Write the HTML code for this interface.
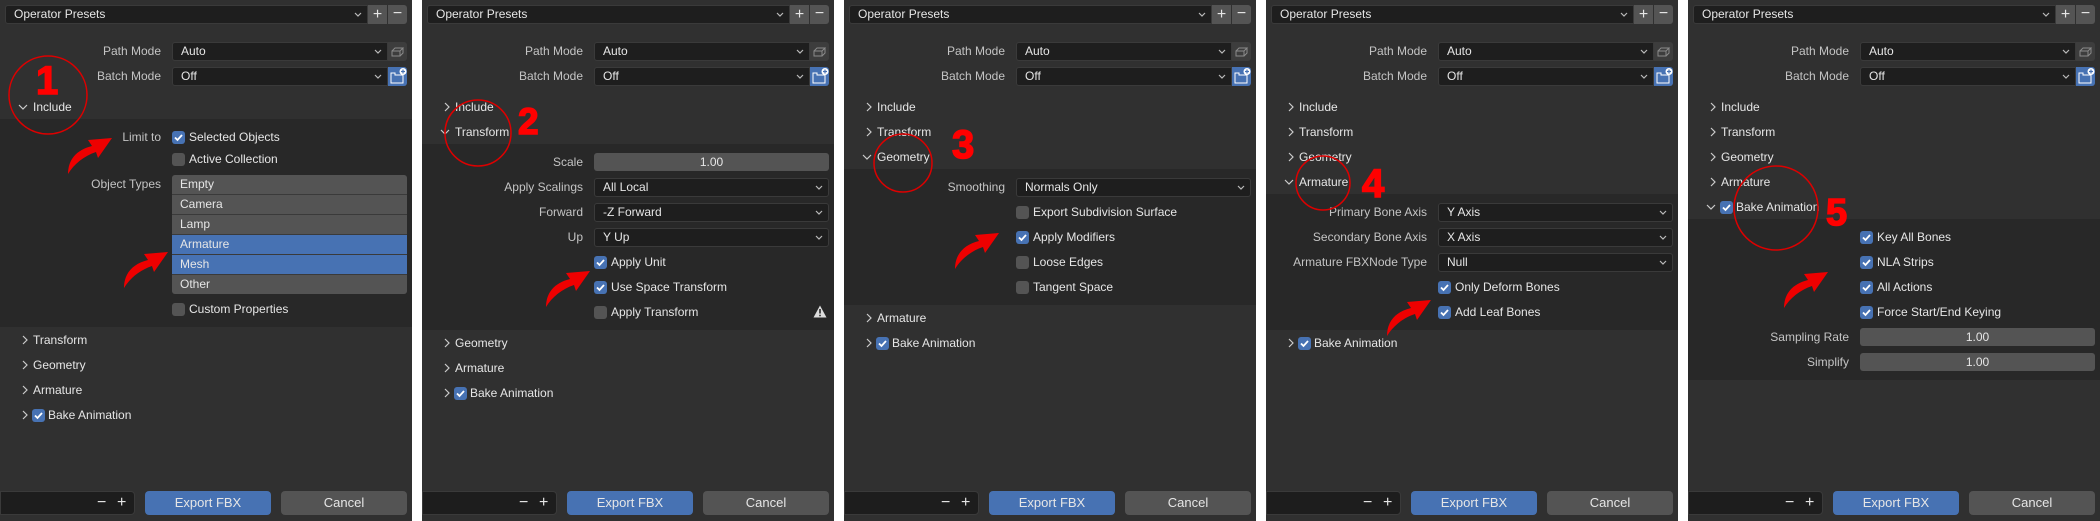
<!DOCTYPE html>
<html><head><meta charset="utf-8"><style>
body{margin:0;width:2100px;height:521px;background:#fff;position:relative;overflow:hidden}
.p{position:absolute;top:0;width:412px;height:521px;background:#303030;overflow:hidden}
.p *{position:absolute;box-sizing:border-box}
.t{font:12px "Liberation Sans",sans-serif;color:#e6e6e6;white-space:nowrap;line-height:14px}
.l{left:0;width:161px;text-align:right;color:#c4c4c4}
.f{left:172px;width:235px;height:19px;background:#1e1e1e;border:1px solid #3a3a3a;border-radius:3px;padding-left:8px;line-height:17px}
.f svg{right:5px;top:6px}
.s{left:172px;width:235px;height:18px;background:#545454;border-radius:3px;text-align:center;line-height:18px}
.cb{left:172px;width:13px;height:13px;border-radius:3px;background:#545454}
.cb.on{background:#4772b3}
.ct{left:189px}
.sec{left:0;width:412px;background:#282828}
.hd{left:33px}
.ot{left:172px;width:235px;height:19px;background:#545454;padding-left:8px;line-height:19px}
.ot.b{background:#4772b3}
.btn{height:24px;top:491px;border-radius:4px;text-align:center;line-height:24px;font-size:13px}
.num{font:900 40px "Liberation Sans",sans-serif;color:#f00;line-height:40px;-webkit-text-stroke:1.5px #f00}
</style></head><body>

<!-- PANEL 1 -->
<div class="p" style="left:0">
<div class="f t" style="left:5px;top:5px;width:363px;height:19px;border-radius:3px 0 0 3px">Operator Presets<svg width="8" height="6"><path d="M1 1l3 3 3-3" stroke="#bbb" fill="none" stroke-width="1.2"/></svg></div>
<div class="t" style="left:368px;top:5px;width:19px;height:19px;background:#545454;text-align:center;line-height:19px;font-size:16px">+</div>
<div class="t" style="left:388px;top:5px;width:19px;height:19px;background:#545454;text-align:center;line-height:18px;font-size:16px;border-radius:0 3px 3px 0">−</div>
<div class="t l" style="top:44px">Path Mode</div>
<div class="f t" style="top:42px;width:216px;border-radius:3px 0 0 3px">Auto<svg width="8" height="6"><path d="M1 1l3 3 3-3" stroke="#bbb" fill="none" stroke-width="1.2"/></svg></div>
<div style="left:388px;top:42px;width:19px;height:19px;background:#3d3d3d;border-radius:0 3px 3px 0"><svg width="19" height="19" style="left:0;top:0"><path d="M4 9h8v5H4zM4 9l3-3h8l-3 3M15 6v5l-3 3" stroke="#8a8a8a" fill="none"/></svg></div>
<div class="t l" style="top:69px">Batch Mode</div>
<div class="f t" style="top:67px;width:216px;border-radius:3px 0 0 3px">Off<svg width="8" height="6"><path d="M1 1l3 3 3-3" stroke="#bbb" fill="none" stroke-width="1.2"/></svg></div>
<div style="left:388px;top:67px;width:19px;height:19px;background:#4772b3;border-radius:0 3px 3px 0"><svg width="19" height="19" style="left:0;top:0"><path d="M3 6h4v2h8v8H3z" stroke="#fff" fill="none"/><circle cx="15" cy="4.5" r="3.5" fill="#fff"/><path d="M15 2.5v4M13 4.5h4" stroke="#4772b3" stroke-width="1.2"/></svg></div>

<svg width="10" height="8" style="left:18px;top:103px"><path d="M1 2l4 4 4-4" stroke="#ccc" fill="none" stroke-width="1.2"/></svg>
<div class="t hd" style="top:100px">Include</div>
<div class="sec" style="top:119px;height:208px"></div>
<div class="t l" style="top:130px">Limit to</div>
<div class="cb on" style="top:131px"><svg width="13" height="13" style="left:0;top:0"><path d="M3 6.5l2.5 2.5 4.5-5" stroke="#fff" stroke-width="1.8" fill="none"/></svg></div>
<div class="t ct" style="top:130px">Selected Objects</div>
<div class="cb" style="top:153px"></div>
<div class="t ct" style="top:152px">Active Collection</div>
<div class="t l" style="top:177px">Object Types</div>
<div style="left:172px;top:175px;width:235px;height:119px;border-radius:3px;overflow:hidden;background:#3a3a3a">
<div class="t ot" style="left:0;top:0">Empty</div>
<div class="t ot" style="left:0;top:20px">Camera</div>
<div class="t ot" style="left:0;top:40px">Lamp</div>
<div class="t ot b" style="left:0;top:60px">Armature</div>
<div class="t ot b" style="left:0;top:80px">Mesh</div>
<div class="t ot" style="left:0;top:100px">Other</div>
</div>
<div class="cb" style="top:303px"></div>
<div class="t ct" style="top:302px">Custom Properties</div>
<svg width="8" height="10" style="left:21px;top:335px"><path d="M2 1l4 4-4 4" stroke="#ccc" fill="none" stroke-width="1.2"/></svg>
<div class="t hd" style="top:333px">Transform</div>
<svg width="8" height="10" style="left:21px;top:360px"><path d="M2 1l4 4-4 4" stroke="#ccc" fill="none" stroke-width="1.2"/></svg>
<div class="t hd" style="top:358px">Geometry</div>
<svg width="8" height="10" style="left:21px;top:385px"><path d="M2 1l4 4-4 4" stroke="#ccc" fill="none" stroke-width="1.2"/></svg>
<div class="t hd" style="top:383px">Armature</div>
<svg width="8" height="10" style="left:21px;top:410px"><path d="M2 1l4 4-4 4" stroke="#ccc" fill="none" stroke-width="1.2"/></svg>
<div class="cb on" style="left:32px;top:409px"><svg width="13" height="13" style="left:0;top:0"><path d="M3 6.5l2.5 2.5 4.5-5" stroke="#fff" stroke-width="1.8" fill="none"/></svg></div>
<div class="t" style="left:48px;top:408px">Bake Animation</div>

<div class="t" style="left:0;top:491px;width:135px;height:24px;background:#1d1d1d;border:1px solid #3a3a3a;border-radius:0 4px 4px 0;font-size:16px;line-height:22px"><span style="left:96px">−</span><span style="left:116px">+</span></div>
<div class="t btn" style="left:145px;width:126px;background:#4772b3">Export FBX</div>
<div class="t btn" style="left:281px;width:126px;background:#545454">Cancel</div>

<svg width="90" height="90" style="left:3px;top:50px"><circle cx="45" cy="45" r="39" stroke="#d00" stroke-width="1.5" fill="none"/></svg>
<div class="num" style="left:36px;top:61px">1</div>
<svg width="44" height="36" style="left:68px;top:138px"><path d="M0,36 C0,22 8,12 24,8 L20,2 L44,0 L30,20 L28,14 C16,18 6,26 0,36Z" fill="#e00"/></svg>
<svg width="44" height="36" style="left:124px;top:252px"><path d="M0,36 C0,22 8,12 24,8 L20,2 L44,0 L30,20 L28,14 C16,18 6,26 0,36Z" fill="#e00"/></svg>
</div>

<!-- PANEL 2 -->
<div class="p" style="left:422px">
<div class="f t" style="left:5px;top:5px;width:363px;height:19px;border-radius:3px 0 0 3px">Operator Presets<svg width="8" height="6"><path d="M1 1l3 3 3-3" stroke="#bbb" fill="none" stroke-width="1.2"/></svg></div>
<div class="t" style="left:368px;top:5px;width:19px;height:19px;background:#545454;text-align:center;line-height:19px;font-size:16px">+</div>
<div class="t" style="left:388px;top:5px;width:19px;height:19px;background:#545454;text-align:center;line-height:18px;font-size:16px;border-radius:0 3px 3px 0">−</div>
<div class="t l" style="top:44px">Path Mode</div>
<div class="f t" style="top:42px;width:216px;border-radius:3px 0 0 3px">Auto<svg width="8" height="6"><path d="M1 1l3 3 3-3" stroke="#bbb" fill="none" stroke-width="1.2"/></svg></div>
<div style="left:388px;top:42px;width:19px;height:19px;background:#3d3d3d;border-radius:0 3px 3px 0"><svg width="19" height="19" style="left:0;top:0"><path d="M4 9h8v5H4zM4 9l3-3h8l-3 3M15 6v5l-3 3" stroke="#8a8a8a" fill="none"/></svg></div>
<div class="t l" style="top:69px">Batch Mode</div>
<div class="f t" style="top:67px;width:216px;border-radius:3px 0 0 3px">Off<svg width="8" height="6"><path d="M1 1l3 3 3-3" stroke="#bbb" fill="none" stroke-width="1.2"/></svg></div>
<div style="left:388px;top:67px;width:19px;height:19px;background:#4772b3;border-radius:0 3px 3px 0"><svg width="19" height="19" style="left:0;top:0"><path d="M3 6h4v2h8v8H3z" stroke="#fff" fill="none"/><circle cx="15" cy="4.5" r="3.5" fill="#fff"/><path d="M15 2.5v4M13 4.5h4" stroke="#4772b3" stroke-width="1.2"/></svg></div>

<svg width="8" height="10" style="left:21px;top:102px"><path d="M2 1l4 4-4 4" stroke="#ccc" fill="none" stroke-width="1.2"/></svg>
<div class="t hd" style="top:100px">Include</div>
<svg width="10" height="8" style="left:18px;top:128px"><path d="M1 2l4 4 4-4" stroke="#ccc" fill="none" stroke-width="1.2"/></svg>
<div class="t hd" style="top:125px">Transform</div>
<div class="sec" style="top:144px;height:186px"></div>
<div class="t l" style="top:155px">Scale</div>
<div class="t s" style="top:153px">1.00</div>
<div class="t l" style="top:180px">Apply Scalings</div>
<div class="f t" style="top:178px">All Local<svg width="8" height="6"><path d="M1 1l3 3 3-3" stroke="#bbb" fill="none" stroke-width="1.2"/></svg></div>
<div class="t l" style="top:205px">Forward</div>
<div class="f t" style="top:203px">-Z Forward<svg width="8" height="6"><path d="M1 1l3 3 3-3" stroke="#bbb" fill="none" stroke-width="1.2"/></svg></div>
<div class="t l" style="top:230px">Up</div>
<div class="f t" style="top:228px">Y Up<svg width="8" height="6"><path d="M1 1l3 3 3-3" stroke="#bbb" fill="none" stroke-width="1.2"/></svg></div>
<div class="cb on" style="top:256px"><svg width="13" height="13" style="left:0;top:0"><path d="M3 6.5l2.5 2.5 4.5-5" stroke="#fff" stroke-width="1.8" fill="none"/></svg></div>
<div class="t ct" style="top:255px">Apply Unit</div>
<div class="cb on" style="top:281px"><svg width="13" height="13" style="left:0;top:0"><path d="M3 6.5l2.5 2.5 4.5-5" stroke="#fff" stroke-width="1.8" fill="none"/></svg></div>
<div class="t ct" style="top:280px">Use Space Transform</div>
<div class="cb" style="top:306px"></div>
<div class="t ct" style="top:305px">Apply Transform</div>
<svg width="14" height="13" style="left:391px;top:305px"><path d="M7 0.5L13.5 12.5H0.5Z" fill="#ddd"/><path d="M7 4v4.5M7 9.8v1.5" stroke="#282828" stroke-width="1.6"/></svg>
<svg width="8" height="10" style="left:21px;top:338px"><path d="M2 1l4 4-4 4" stroke="#ccc" fill="none" stroke-width="1.2"/></svg>
<div class="t hd" style="top:336px">Geometry</div>
<svg width="8" height="10" style="left:21px;top:363px"><path d="M2 1l4 4-4 4" stroke="#ccc" fill="none" stroke-width="1.2"/></svg>
<div class="t hd" style="top:361px">Armature</div>
<svg width="8" height="10" style="left:21px;top:388px"><path d="M2 1l4 4-4 4" stroke="#ccc" fill="none" stroke-width="1.2"/></svg>
<div class="cb on" style="left:32px;top:387px"><svg width="13" height="13" style="left:0;top:0"><path d="M3 6.5l2.5 2.5 4.5-5" stroke="#fff" stroke-width="1.8" fill="none"/></svg></div>
<div class="t" style="left:48px;top:386px">Bake Animation</div>

<div class="t" style="left:0;top:491px;width:135px;height:24px;background:#1d1d1d;border:1px solid #3a3a3a;border-radius:0 4px 4px 0;font-size:16px;line-height:22px"><span style="left:96px">−</span><span style="left:116px">+</span></div>
<div class="t btn" style="left:145px;width:126px;background:#4772b3">Export FBX</div>
<div class="t btn" style="left:281px;width:126px;background:#545454">Cancel</div>

<svg width="70" height="70" style="left:21px;top:98px"><circle cx="35" cy="35" r="33" stroke="#d00" stroke-width="1.5" fill="none"/></svg>
<div class="num" style="left:96px;top:102px;font-size:37px">2</div>
<svg width="44" height="36" style="left:124px;top:271px"><path d="M0,36 C0,22 8,12 24,8 L20,2 L44,0 L30,20 L28,14 C16,18 6,26 0,36Z" fill="#e00"/></svg>
</div>

<!-- PANEL 3 -->
<div class="p" style="left:844px">
<div class="f t" style="left:5px;top:5px;width:363px;height:19px;border-radius:3px 0 0 3px">Operator Presets<svg width="8" height="6"><path d="M1 1l3 3 3-3" stroke="#bbb" fill="none" stroke-width="1.2"/></svg></div>
<div class="t" style="left:368px;top:5px;width:19px;height:19px;background:#545454;text-align:center;line-height:19px;font-size:16px">+</div>
<div class="t" style="left:388px;top:5px;width:19px;height:19px;background:#545454;text-align:center;line-height:18px;font-size:16px;border-radius:0 3px 3px 0">−</div>
<div class="t l" style="top:44px">Path Mode</div>
<div class="f t" style="top:42px;width:216px;border-radius:3px 0 0 3px">Auto<svg width="8" height="6"><path d="M1 1l3 3 3-3" stroke="#bbb" fill="none" stroke-width="1.2"/></svg></div>
<div style="left:388px;top:42px;width:19px;height:19px;background:#3d3d3d;border-radius:0 3px 3px 0"><svg width="19" height="19" style="left:0;top:0"><path d="M4 9h8v5H4zM4 9l3-3h8l-3 3M15 6v5l-3 3" stroke="#8a8a8a" fill="none"/></svg></div>
<div class="t l" style="top:69px">Batch Mode</div>
<div class="f t" style="top:67px;width:216px;border-radius:3px 0 0 3px">Off<svg width="8" height="6"><path d="M1 1l3 3 3-3" stroke="#bbb" fill="none" stroke-width="1.2"/></svg></div>
<div style="left:388px;top:67px;width:19px;height:19px;background:#4772b3;border-radius:0 3px 3px 0"><svg width="19" height="19" style="left:0;top:0"><path d="M3 6h4v2h8v8H3z" stroke="#fff" fill="none"/><circle cx="15" cy="4.5" r="3.5" fill="#fff"/><path d="M15 2.5v4M13 4.5h4" stroke="#4772b3" stroke-width="1.2"/></svg></div>

<svg width="8" height="10" style="left:21px;top:102px"><path d="M2 1l4 4-4 4" stroke="#ccc" fill="none" stroke-width="1.2"/></svg>
<div class="t hd" style="top:100px">Include</div>
<svg width="8" height="10" style="left:21px;top:127px"><path d="M2 1l4 4-4 4" stroke="#ccc" fill="none" stroke-width="1.2"/></svg>
<div class="t hd" style="top:125px">Transform</div>
<svg width="10" height="8" style="left:18px;top:153px"><path d="M1 2l4 4 4-4" stroke="#ccc" fill="none" stroke-width="1.2"/></svg>
<div class="t hd" style="top:150px">Geometry</div>
<div class="sec" style="top:169px;height:136px"></div>
<div class="t l" style="top:180px">Smoothing</div>
<div class="f t" style="top:178px">Normals Only<svg width="8" height="6"><path d="M1 1l3 3 3-3" stroke="#bbb" fill="none" stroke-width="1.2"/></svg></div>
<div class="cb" style="top:206px"></div>
<div class="t ct" style="top:205px">Export Subdivision Surface</div>
<div class="cb on" style="top:231px"><svg width="13" height="13" style="left:0;top:0"><path d="M3 6.5l2.5 2.5 4.5-5" stroke="#fff" stroke-width="1.8" fill="none"/></svg></div>
<div class="t ct" style="top:230px">Apply Modifiers</div>
<div class="cb" style="top:256px"></div>
<div class="t ct" style="top:255px">Loose Edges</div>
<div class="cb" style="top:281px"></div>
<div class="t ct" style="top:280px">Tangent Space</div>
<svg width="8" height="10" style="left:21px;top:313px"><path d="M2 1l4 4-4 4" stroke="#ccc" fill="none" stroke-width="1.2"/></svg>
<div class="t hd" style="top:311px">Armature</div>
<svg width="8" height="10" style="left:21px;top:338px"><path d="M2 1l4 4-4 4" stroke="#ccc" fill="none" stroke-width="1.2"/></svg>
<div class="cb on" style="left:32px;top:337px"><svg width="13" height="13" style="left:0;top:0"><path d="M3 6.5l2.5 2.5 4.5-5" stroke="#fff" stroke-width="1.8" fill="none"/></svg></div>
<div class="t" style="left:48px;top:336px">Bake Animation</div>

<div class="t" style="left:0;top:491px;width:135px;height:24px;background:#1d1d1d;border:1px solid #3a3a3a;border-radius:0 4px 4px 0;font-size:16px;line-height:22px"><span style="left:96px">−</span><span style="left:116px">+</span></div>
<div class="t btn" style="left:145px;width:126px;background:#4772b3">Export FBX</div>
<div class="t btn" style="left:281px;width:126px;background:#545454">Cancel</div>

<svg width="62" height="62" style="left:28px;top:132px"><circle cx="31" cy="31" r="29" stroke="#d00" stroke-width="1.5" fill="none"/></svg>
<div class="num" style="left:108px;top:125px;font-size:40px">3</div>
<svg width="44" height="36" style="left:111px;top:233px"><path d="M0,36 C0,22 8,12 24,8 L20,2 L44,0 L30,20 L28,14 C16,18 6,26 0,36Z" fill="#e00"/></svg>
</div>

<!-- PANEL 4 -->
<div class="p" style="left:1266px">
<div class="f t" style="left:5px;top:5px;width:363px;height:19px;border-radius:3px 0 0 3px">Operator Presets<svg width="8" height="6"><path d="M1 1l3 3 3-3" stroke="#bbb" fill="none" stroke-width="1.2"/></svg></div>
<div class="t" style="left:368px;top:5px;width:19px;height:19px;background:#545454;text-align:center;line-height:19px;font-size:16px">+</div>
<div class="t" style="left:388px;top:5px;width:19px;height:19px;background:#545454;text-align:center;line-height:18px;font-size:16px;border-radius:0 3px 3px 0">−</div>
<div class="t l" style="top:44px">Path Mode</div>
<div class="f t" style="top:42px;width:216px;border-radius:3px 0 0 3px">Auto<svg width="8" height="6"><path d="M1 1l3 3 3-3" stroke="#bbb" fill="none" stroke-width="1.2"/></svg></div>
<div style="left:388px;top:42px;width:19px;height:19px;background:#3d3d3d;border-radius:0 3px 3px 0"><svg width="19" height="19" style="left:0;top:0"><path d="M4 9h8v5H4zM4 9l3-3h8l-3 3M15 6v5l-3 3" stroke="#8a8a8a" fill="none"/></svg></div>
<div class="t l" style="top:69px">Batch Mode</div>
<div class="f t" style="top:67px;width:216px;border-radius:3px 0 0 3px">Off<svg width="8" height="6"><path d="M1 1l3 3 3-3" stroke="#bbb" fill="none" stroke-width="1.2"/></svg></div>
<div style="left:388px;top:67px;width:19px;height:19px;background:#4772b3;border-radius:0 3px 3px 0"><svg width="19" height="19" style="left:0;top:0"><path d="M3 6h4v2h8v8H3z" stroke="#fff" fill="none"/><circle cx="15" cy="4.5" r="3.5" fill="#fff"/><path d="M15 2.5v4M13 4.5h4" stroke="#4772b3" stroke-width="1.2"/></svg></div>

<svg width="8" height="10" style="left:21px;top:102px"><path d="M2 1l4 4-4 4" stroke="#ccc" fill="none" stroke-width="1.2"/></svg>
<div class="t hd" style="top:100px">Include</div>
<svg width="8" height="10" style="left:21px;top:127px"><path d="M2 1l4 4-4 4" stroke="#ccc" fill="none" stroke-width="1.2"/></svg>
<div class="t hd" style="top:125px">Transform</div>
<svg width="8" height="10" style="left:21px;top:152px"><path d="M2 1l4 4-4 4" stroke="#ccc" fill="none" stroke-width="1.2"/></svg>
<div class="t hd" style="top:150px">Geometry</div>
<svg width="10" height="8" style="left:18px;top:178px"><path d="M1 2l4 4 4-4" stroke="#ccc" fill="none" stroke-width="1.2"/></svg>
<div class="t hd" style="top:175px">Armature</div>
<div class="sec" style="top:194px;height:136px"></div>
<div class="t l" style="top:205px">Primary Bone Axis</div>
<div class="f t" style="top:203px">Y Axis<svg width="8" height="6"><path d="M1 1l3 3 3-3" stroke="#bbb" fill="none" stroke-width="1.2"/></svg></div>
<div class="t l" style="top:230px">Secondary Bone Axis</div>
<div class="f t" style="top:228px">X Axis<svg width="8" height="6"><path d="M1 1l3 3 3-3" stroke="#bbb" fill="none" stroke-width="1.2"/></svg></div>
<div class="t l" style="top:255px">Armature FBXNode Type</div>
<div class="f t" style="top:253px">Null<svg width="8" height="6"><path d="M1 1l3 3 3-3" stroke="#bbb" fill="none" stroke-width="1.2"/></svg></div>
<div class="cb on" style="top:281px"><svg width="13" height="13" style="left:0;top:0"><path d="M3 6.5l2.5 2.5 4.5-5" stroke="#fff" stroke-width="1.8" fill="none"/></svg></div>
<div class="t ct" style="top:280px">Only Deform Bones</div>
<div class="cb on" style="top:306px"><svg width="13" height="13" style="left:0;top:0"><path d="M3 6.5l2.5 2.5 4.5-5" stroke="#fff" stroke-width="1.8" fill="none"/></svg></div>
<div class="t ct" style="top:305px">Add Leaf Bones</div>
<svg width="8" height="10" style="left:21px;top:338px"><path d="M2 1l4 4-4 4" stroke="#ccc" fill="none" stroke-width="1.2"/></svg>
<div class="cb on" style="left:32px;top:337px"><svg width="13" height="13" style="left:0;top:0"><path d="M3 6.5l2.5 2.5 4.5-5" stroke="#fff" stroke-width="1.8" fill="none"/></svg></div>
<div class="t" style="left:48px;top:336px">Bake Animation</div>

<div class="t" style="left:0;top:491px;width:135px;height:24px;background:#1d1d1d;border:1px solid #3a3a3a;border-radius:0 4px 4px 0;font-size:16px;line-height:22px"><span style="left:96px">−</span><span style="left:116px">+</span></div>
<div class="t btn" style="left:145px;width:126px;background:#4772b3">Export FBX</div>
<div class="t btn" style="left:281px;width:126px;background:#545454">Cancel</div>

<svg width="58" height="58" style="left:28px;top:154px"><circle cx="29" cy="29" r="27" stroke="#d00" stroke-width="1.5" fill="none"/></svg>
<div class="num" style="left:96px;top:164px;font-size:40px">4</div>
<svg width="44" height="36" style="left:121px;top:300px"><path d="M0,36 C0,22 8,12 24,8 L20,2 L44,0 L30,20 L28,14 C16,18 6,26 0,36Z" fill="#e00"/></svg>
</div>

<!-- PANEL 5 -->
<div class="p" style="left:1688px">
<div class="f t" style="left:5px;top:5px;width:363px;height:19px;border-radius:3px 0 0 3px">Operator Presets<svg width="8" height="6"><path d="M1 1l3 3 3-3" stroke="#bbb" fill="none" stroke-width="1.2"/></svg></div>
<div class="t" style="left:368px;top:5px;width:19px;height:19px;background:#545454;text-align:center;line-height:19px;font-size:16px">+</div>
<div class="t" style="left:388px;top:5px;width:19px;height:19px;background:#545454;text-align:center;line-height:18px;font-size:16px;border-radius:0 3px 3px 0">−</div>
<div class="t l" style="top:44px">Path Mode</div>
<div class="f t" style="top:42px;width:216px;border-radius:3px 0 0 3px">Auto<svg width="8" height="6"><path d="M1 1l3 3 3-3" stroke="#bbb" fill="none" stroke-width="1.2"/></svg></div>
<div style="left:388px;top:42px;width:19px;height:19px;background:#3d3d3d;border-radius:0 3px 3px 0"><svg width="19" height="19" style="left:0;top:0"><path d="M4 9h8v5H4zM4 9l3-3h8l-3 3M15 6v5l-3 3" stroke="#8a8a8a" fill="none"/></svg></div>
<div class="t l" style="top:69px">Batch Mode</div>
<div class="f t" style="top:67px;width:216px;border-radius:3px 0 0 3px">Off<svg width="8" height="6"><path d="M1 1l3 3 3-3" stroke="#bbb" fill="none" stroke-width="1.2"/></svg></div>
<div style="left:388px;top:67px;width:19px;height:19px;background:#4772b3;border-radius:0 3px 3px 0"><svg width="19" height="19" style="left:0;top:0"><path d="M3 6h4v2h8v8H3z" stroke="#fff" fill="none"/><circle cx="15" cy="4.5" r="3.5" fill="#fff"/><path d="M15 2.5v4M13 4.5h4" stroke="#4772b3" stroke-width="1.2"/></svg></div>

<svg width="8" height="10" style="left:21px;top:102px"><path d="M2 1l4 4-4 4" stroke="#ccc" fill="none" stroke-width="1.2"/></svg>
<div class="t hd" style="top:100px">Include</div>
<svg width="8" height="10" style="left:21px;top:127px"><path d="M2 1l4 4-4 4" stroke="#ccc" fill="none" stroke-width="1.2"/></svg>
<div class="t hd" style="top:125px">Transform</div>
<svg width="8" height="10" style="left:21px;top:152px"><path d="M2 1l4 4-4 4" stroke="#ccc" fill="none" stroke-width="1.2"/></svg>
<div class="t hd" style="top:150px">Geometry</div>
<svg width="8" height="10" style="left:21px;top:177px"><path d="M2 1l4 4-4 4" stroke="#ccc" fill="none" stroke-width="1.2"/></svg>
<div class="t hd" style="top:175px">Armature</div>
<svg width="10" height="8" style="left:18px;top:203px"><path d="M1 2l4 4 4-4" stroke="#ccc" fill="none" stroke-width="1.2"/></svg>
<div class="cb on" style="left:32px;top:201px"><svg width="13" height="13" style="left:0;top:0"><path d="M3 6.5l2.5 2.5 4.5-5" stroke="#fff" stroke-width="1.8" fill="none"/></svg></div>
<div class="t" style="left:48px;top:200px">Bake Animation</div>
<div class="sec" style="top:219px;height:161px"></div>
<div class="cb on" style="top:231px"><svg width="13" height="13" style="left:0;top:0"><path d="M3 6.5l2.5 2.5 4.5-5" stroke="#fff" stroke-width="1.8" fill="none"/></svg></div>
<div class="t ct" style="top:230px">Key All Bones</div>
<div class="cb on" style="top:256px"><svg width="13" height="13" style="left:0;top:0"><path d="M3 6.5l2.5 2.5 4.5-5" stroke="#fff" stroke-width="1.8" fill="none"/></svg></div>
<div class="t ct" style="top:255px">NLA Strips</div>
<div class="cb on" style="top:281px"><svg width="13" height="13" style="left:0;top:0"><path d="M3 6.5l2.5 2.5 4.5-5" stroke="#fff" stroke-width="1.8" fill="none"/></svg></div>
<div class="t ct" style="top:280px">All Actions</div>
<div class="cb on" style="top:306px"><svg width="13" height="13" style="left:0;top:0"><path d="M3 6.5l2.5 2.5 4.5-5" stroke="#fff" stroke-width="1.8" fill="none"/></svg></div>
<div class="t ct" style="top:305px">Force Start/End Keying</div>
<div class="t l" style="top:330px">Sampling Rate</div>
<div class="t s" style="top:328px">1.00</div>
<div class="t l" style="top:355px">Simplify</div>
<div class="t s" style="top:353px">1.00</div>

<div class="t" style="left:0;top:491px;width:135px;height:24px;background:#1d1d1d;border:1px solid #3a3a3a;border-radius:0 4px 4px 0;font-size:16px;line-height:22px"><span style="left:96px">−</span><span style="left:116px">+</span></div>
<div class="t btn" style="left:145px;width:126px;background:#4772b3">Export FBX</div>
<div class="t btn" style="left:281px;width:126px;background:#545454">Cancel</div>

<svg width="88" height="88" style="left:44px;top:164px"><circle cx="44" cy="44" r="42" stroke="#d00" stroke-width="1.5" fill="none"/></svg>
<div class="num" style="left:138px;top:193px;font-size:38px">5</div>
<svg width="44" height="36" style="left:96px;top:272px"><path d="M0,36 C0,22 8,12 24,8 L20,2 L44,0 L30,20 L28,14 C16,18 6,26 0,36Z" fill="#e00"/></svg>
</div>

</body></html>
